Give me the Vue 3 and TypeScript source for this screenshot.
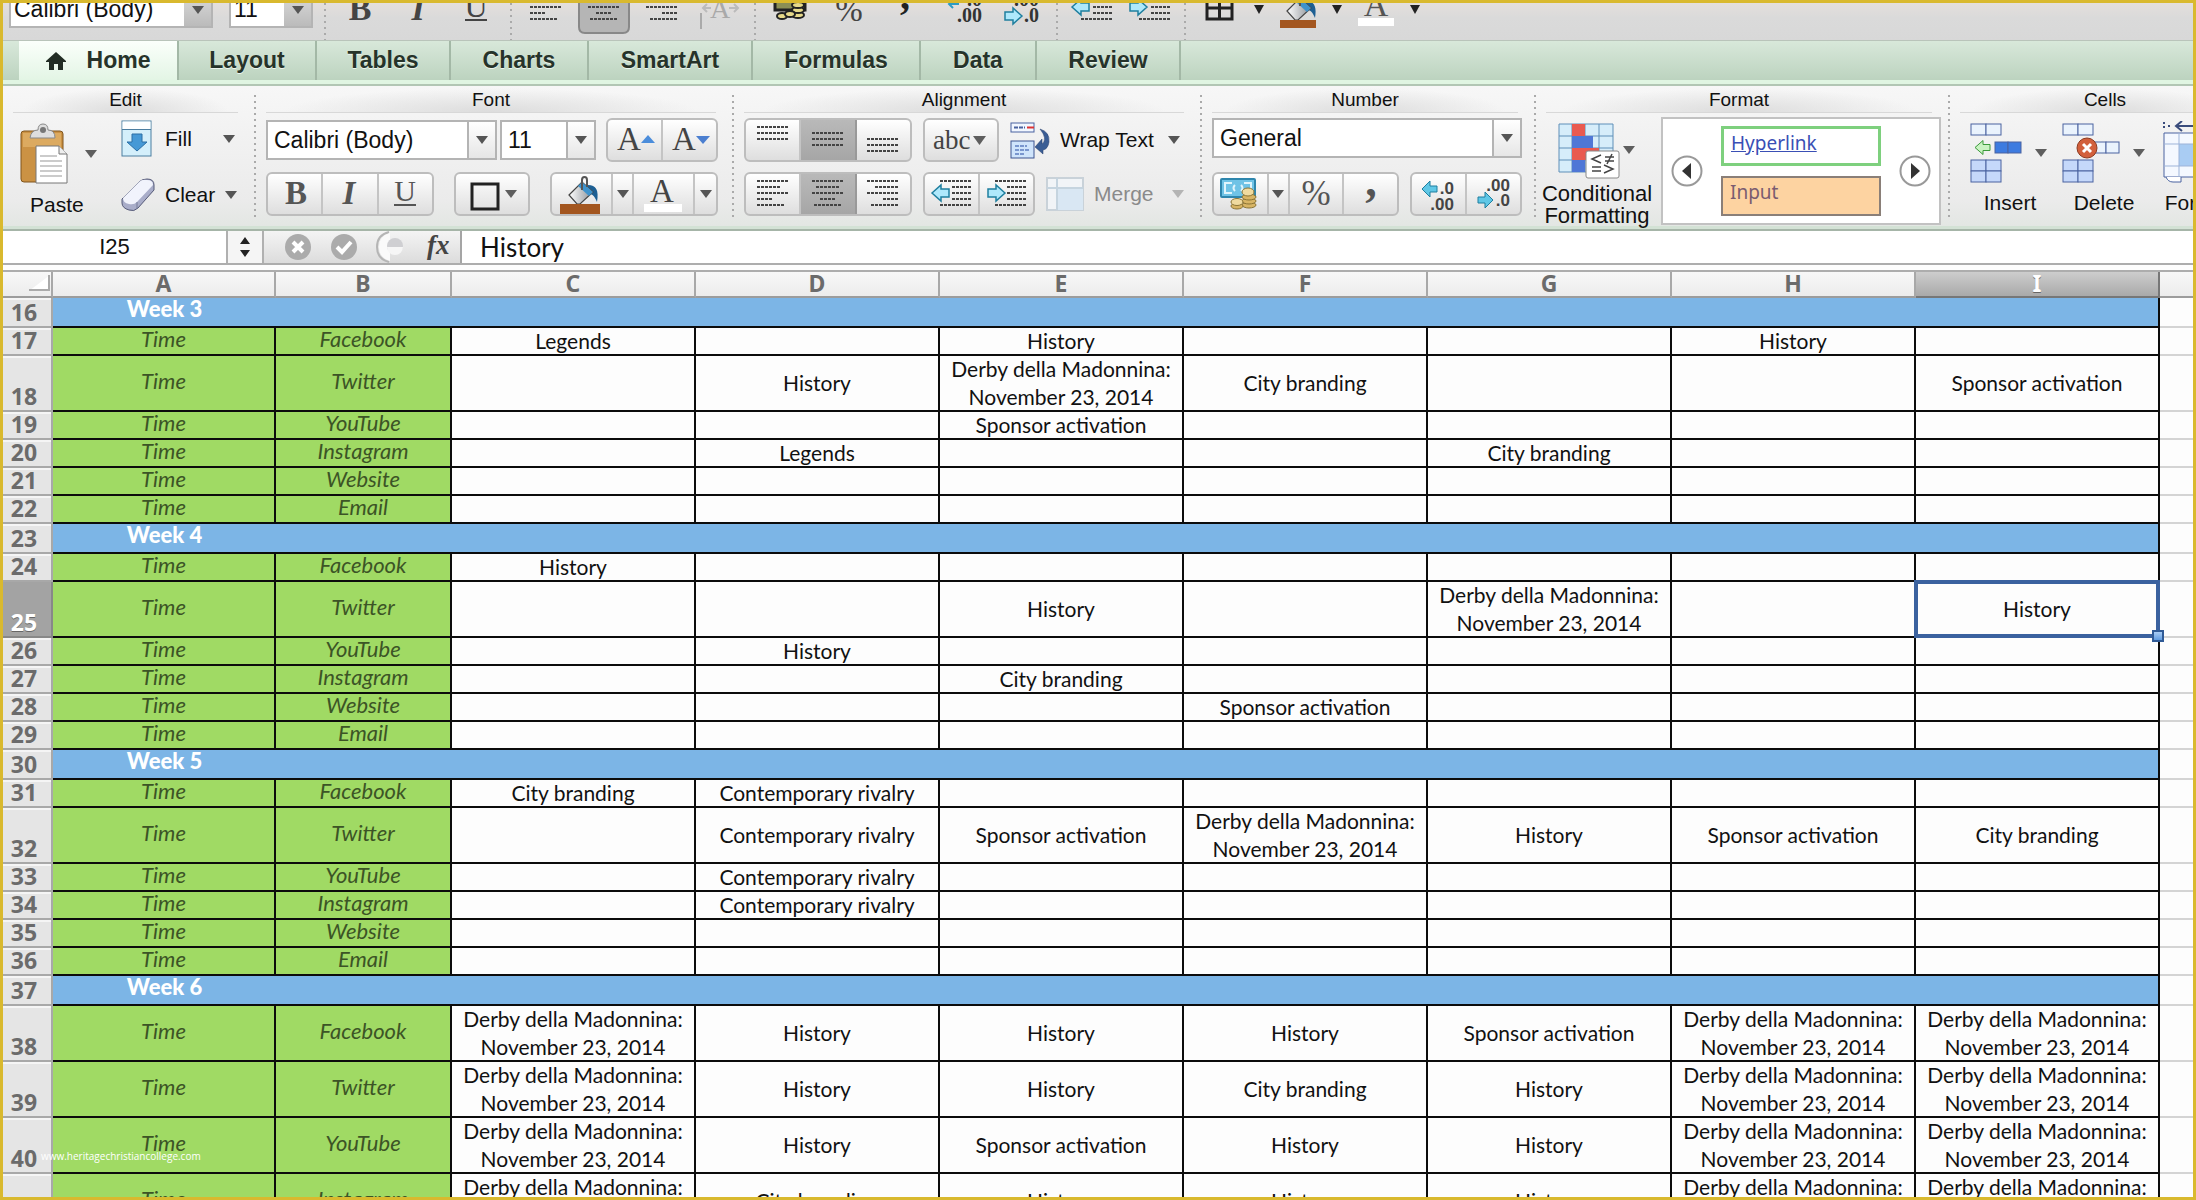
<script setup lang="ts">
import { h, ref } from 'vue'

type IconDef = [number, number, string]

// Builds a block of text-like rules; each entry is [x, y, width].
const rules = (list: number[][], color = '#444') =>
  list
    .map(([x, y, w]) => `<path d="M${x} ${y}h${w}" stroke="${color}" stroke-width="2" stroke-dasharray="3 1"/>`)
    .join('')

const tri = (x: number, y: number, w: number, hgt: number, fill = '#5e5e5e') =>
  `<path d="M${x} ${y}h${w}l${-w / 2} ${hgt}z" fill="${fill}"/>`

const serif = `font-family="Liberation Serif, serif"`
const sans = `font-family="Liberation Sans, sans-serif"`
const arrowL = (x: number, y: number) =>
  `<path d="M${x} ${y}l9-8v4h8v8h-8v4z" fill="#aee8fb" stroke="#1f7f9f" stroke-width="1.5"/>`
const arrowR = (x: number, y: number) =>
  `<path d="M${x} ${y}l-9-8v4h-8v8h8v4z" fill="#aee8fb" stroke="#1f7f9f" stroke-width="1.5"/>`
const ys = [9, 15, 21, 27, 33]
const ws = [32, 24, 32, 16, 28]
const bucket = (x: number, y: number) => `<g transform="translate(${x} ${y})">
  <path d="M24 8c8 0 11 5 9 17-2-5-4-8-9-9z" fill="#1d5f93"/>
  <path d="M5 18 18 5l11 10-13 12H13z" fill="url(#steel)" stroke="#444" stroke-width="1.2"/>
  <path d="M14 9l4-4 11 10-4 4z" fill="#3f93cc"/>
  <path d="M18 13V3q0-3 2.500-3T23 3v7" fill="none" stroke="#555" stroke-width="2"/></g>`
const coins = `<rect x="1" y="1" width="34" height="18" rx="1" fill="#6fc3e6" stroke="#2e86ad" stroke-width="2"/>
  <path d="M12 5H5v10h7M24 5h7v10h-7M15 7q-3 3 0 6M21 7q3 3 0 6" fill="none" stroke="#dff5fc" stroke-width="2"/>
  <g fill="#d8b565" stroke="#8b7434"><ellipse cx="29" cy="27" rx="7" ry="3"/><ellipse cx="29" cy="23" rx="7" ry="3"/><ellipse cx="29" cy="19" rx="7" ry="3"/><ellipse cx="28" cy="14" rx="6" ry="4" fill="#f0dba0"/><ellipse cx="17" cy="28" rx="6" ry="3"/><ellipse cx="17" cy="24" rx="6" ry="3.500" fill="#f0dba0"/></g>`
const cellGrid = (x: number, y: number, cols: number, rows: number, fill: string, cw = 15, rh = 11) => {
  let out = ''
  for (let r = 0; r < rows; r++)
    for (let c = 0; c < cols; c++)
      out += `<rect x="${x + c * cw}" y="${y + r * rh}" width="${cw}" height="${rh}" fill="${fill}" stroke="#4a63a0"/>`
  return out
}

const icons: Record<string, IconDef> = {
  // quick toolbar, 58 wide slots
  tBold: [58, 37, `<text x="29" y="17" text-anchor="middle" ${serif} font-size="34" font-weight="700" fill="#444">B</text>`],
  tItalic: [58, 37, `<text x="29" y="17" text-anchor="middle" ${serif} font-size="34" font-weight="700" font-style="italic" fill="#444">I</text>`],
  tUnder: [58, 37, `<text x="29" y="14" text-anchor="middle" ${serif} font-size="32" fill="#444">U</text><path d="M18 17h22" stroke="#444" stroke-width="2"/>`],
  tLeft: [58, 37, rules([[13, 4, 32], [13, 10, 16], [13, 16, 28]])],
  tCenter: [58, 37, `<path d="M4 -9v33q0 6 6 6h38q6 0 6-6V-9z" fill="#b5b5b5" stroke="#888" stroke-width="2"/>` + rules([[13, 4, 32], [21, 10, 16], [15, 16, 28]])],
  tRight: [58, 37, rules([[13, 4, 32], [29, 10, 16], [17, 16, 28]])],
  tEffect: [58, 37, `<path d="M10 10v16" stroke="#aaa" stroke-width="2"/><text x="29" y="15" text-anchor="middle" ${serif} font-size="28" fill="#a9a9a9">A</text><path d="M20 5h-7m3-4-4 4 4 4M38 5h8m-3-4 4 4-4 4" fill="none" stroke="#bbb" stroke-width="2"/>`],
  tMoney: [58, 37, `<path d="M14 -4h30v11H14z" fill="#8b8f55" stroke="#222" stroke-width="3"/><g fill="#e6d98a" stroke="#222" stroke-width="2"><ellipse cx="37" cy="12" rx="6" ry="3"/><ellipse cx="37" cy="7" rx="6" ry="3"/><ellipse cx="37" cy="2" rx="6" ry="3"/><ellipse cx="21" cy="13" rx="5" ry="3"/><ellipse cx="29" cy="11" rx="5" ry="3"/></g>`],
  tPercent: [58, 37, `<text x="30" y="18" text-anchor="middle" ${serif} font-size="33" fill="#444">%</text>`],
  tComma: [58, 37, `<text x="28" y="6" text-anchor="middle" ${serif} font-size="40" font-weight="700" fill="#222">,</text>`],
  tDecUp: [58, 37, `<path d="M24 1h-9m3-4-4 4 4 4" fill="none" stroke="#2d9cc4" stroke-width="2"/><g ${serif} font-size="20" fill="#333" text-anchor="end" font-weight="700"><text x="47" y="3">.0</text><text x="47" y="19">.00</text></g>`],
  tDecDown: [58, 37, arrowR(29, 13) + `<g ${serif} font-size="20" fill="#333" text-anchor="end" font-weight="700"><text x="46" y="3">.00</text><text x="46" y="19">.0</text></g>`],
  tOutdent: [58, 37, arrowL(9, 4) + rules([[30, 4, 20], [30, 10, 20], [18, 16, 32]])],
  tIndent: [58, 37, arrowR(26, 4) + rules([[30, 4, 20], [30, 10, 20], [18, 16, 32]])],
  tGrid: [58, 37, `<path d="M16 -6h25v22H16zM28.500 -6v22M16 5h25" fill="none" stroke="#222" stroke-width="3"/>`],
  tArrow: [20, 37, tri(5, 2, 10, 9, '#222')],
  tBucket: [58, 37, bucket(13, -10) + `<path d="M11 17h36v8H11z" fill="#a3561f"/>`],
  tFontColor: [58, 37, `<text x="29" y="13" text-anchor="middle" ${serif} font-size="34" fill="#555">A</text><path d="M11 15h36v8H11z" fill="#fff"/>`],
  // generic
  down: [12, 8, tri(0, 0, 12, 8, '#555')],
  downPale: [12, 8, tri(0, 0, 12, 8, '#b4b4b4')],
  home: [20, 18, `<path d="M10 0l10 9v1h-3v8h-5v-6H8v6H3v-8H0V9z" fill="#222d24"/>`],
  paste: [84, 64, `<rect x="3" y="10" width="42" height="51" rx="3" fill="#cb9244" stroke="#80551d"/>
    <path d="M5 12h38v14H5z" fill="#dcaa60"/>
    <path d="M12 17q1-8 8-8 0-6 5-6t5 6q7 0 7 8z" fill="#dedede" stroke="#888"/><circle cx="25" cy="9" r="3" fill="#777"/>
    <path d="M18 25h23l8 8v29H18z" fill="#fff" stroke="#777"/><path d="M41 25v8h8" fill="#eee" stroke="#777"/>
    <path d="M22 35h17M22 40h22M22 45h22M22 50h22M22 55h22" stroke="#bbb" stroke-width="1.500"/>` + tri(67, 29, 12, 8)],
  fill: [34, 38, `<rect x="1" y="1" width="29" height="35" fill="#d4effb" stroke="#4d7ea0"/><path d="M1.500 1.500h28v8h-28z" fill="#fff"/><path d="M1 9.500h29" stroke="#4d7ea0"/><path d="M11 14h10v8h5L16 31 6 22h5z" fill="#4699d6" stroke="#2b6ea5"/>`],
  clear: [34, 34, `<path d="M1 21 18 4q3-3 8-3 7 0 7 6v5L17 30q-4 4-9 2-7-2-7-7z" fill="#a9adc9" stroke="#555a78"/><path d="M2 20 18 4q3-3 8-2 6 0 6 5L16 24q-3 3-8 2-6-1-6-6z" fill="#f1f3fc"/><path d="M16 24v7" stroke="#777c99"/>`],
  bigA: [54, 40, `<text x="9" y="30" ${serif} font-size="33" fill="#444">A</text><path d="M33 23h14l-7-8z" fill="#4b8ddb" />`],
  smallA: [54, 40, `<text x="9" y="30" ${serif} font-size="33" fill="#444">A</text><path d="M33 16h14l-7 8z" fill="#4b7fd0"/>`],
  bold: [54, 40, `<text x="28" y="30" text-anchor="middle" ${serif} font-size="33" font-weight="700" fill="#555">B</text>`],
  italic: [54, 40, `<text x="26" y="30" text-anchor="middle" ${serif} font-size="33" font-weight="700" font-style="italic" fill="#555">I</text>`],
  under: [54, 40, `<text x="27" y="27" text-anchor="middle" ${serif} font-size="30" fill="#555">U</text><path d="M16 31h22" stroke="#555" stroke-width="2"/>`],
  border: [70, 40, `<path d="M15 10h26v25H15z" fill="none" stroke="#222" stroke-width="3"/>` + tri(48, 16, 12, 8)],
  bucket: [60, 40, bucket(12, 3) + `<path d="M8 30h40v10H8z" fill="#a3561f"/>`],
  fontColor: [62, 40, `<text x="29" y="28" text-anchor="middle" ${serif} font-size="33" fill="#444">A</text><path d="M11 30h38v8H11z" fill="#fff"/>`],
  vTop: [56, 44, rules([[12, 9, 32], [12, 15, 32], [12, 21, 32]])],
  vMid: [56, 44, rules([[12, 15, 32], [12, 21, 32], [12, 27, 32]])],
  vBot: [56, 44, rules([[12, 21, 32], [12, 27, 32], [12, 33, 32]])],
  hLeft: [56, 44, rules(ys.map((y, i) => [12, y, ws[i]]))],
  hCenter: [56, 44, rules(ys.map((y, i) => [12 + (32 - ws[i]) / 2, y, ws[i]]))],
  hRight: [56, 44, rules(ys.map((y, i) => [44 - ws[i], y, ws[i]]))],
  outdent: [56, 44, arrowL(8, 21) + rules([[16, 9, 32], [28, 15, 20], [28, 21, 20], [28, 27, 20], [16, 33, 32]])],
  indent: [56, 44, arrowR(26, 21) + rules([[16, 9, 32], [28, 15, 20], [28, 21, 20], [28, 27, 20], [16, 33, 32]])],
  abc: [72, 40, `<text x="8" y="29" ${serif} font-size="27" fill="#444">abc</text>` + tri(48, 16, 13, 9)],
  wrap: [40, 38, `<rect x="1" y="2" width="23" height="9" fill="#f2f7ff" stroke="#4a63a0"/><path d="M4 6.500h11" stroke="#4a63a0" stroke-width="2" stroke-dasharray="4 1"/><path d="M17 6.500h7" stroke="#d33" stroke-width="2"/>
    <rect x="1" y="20" width="23" height="17" fill="#cfe4fb" stroke="#3c5590"/><path d="M5 25h12M5 29h14M5 33h9" stroke="#5d7cc0" stroke-width="1.500" stroke-dasharray="4 1"/>
    <path d="M30 8q10 3 9 13-1 7-6 8v4l-8-7 7-8v5q6-5-2-15z" fill="#3a5d94" stroke="#243d6b" stroke-width=".5"/>`],
  merge: [38, 34, `<rect x="1" y="1" width="36" height="32" fill="#f1f4f7" stroke="#c9d2d9" stroke-width="2"/><path d="M11 11h26v22H11z" fill="#d9e7f3"/><path d="M11 1v32M1 11h36" stroke="#c5d4df" stroke-width="2"/>`],
  money: [52, 40, `<g transform="translate(6 4)">${coins}</g>`],
  percent: [54, 40, `<text x="27" y="31" text-anchor="middle" ${serif} font-size="35" fill="#555">%</text>`],
  comma: [54, 40, `<text x="27" y="22" text-anchor="middle" ${serif} font-size="46" font-weight="700" fill="#555">,</text>`],
  decUp: [54, 40, `<path d="M10 15l8-8v5h7v6h-7v5z" fill="#5fc7e6" stroke="#1f7f9f"/><g ${sans} font-size="17" font-weight="700" fill="#444" text-anchor="end"><text x="42" y="20">.0</text><text x="42" y="36">.00</text></g>`],
  decDown: [54, 40, `<path d="M26 26l-8-8v5h-7v6h7v5z" fill="#5fc7e6" stroke="#1f7f9f"/><g ${sans} font-size="17" font-weight="700" fill="#444" text-anchor="end"><text x="43" y="17">.00</text><text x="43" y="32">.0</text></g>`],
  cond: [84, 58, `<g stroke="#5e8fb8"><path d="M4 3h54v48H4z" fill="#d6edfa"/><path d="M4 15h54M4 27h54M4 39h54M17 3v48M30 3v48M44 3v48" fill="none"/></g>
    <path d="M17 3h13v12H17zM17 27h27v12H17z" fill="#e95a50"/><path d="M17 15h21v12H17zM17 39h13v12H17z" fill="#4f77d6"/>
    <rect x="31" y="30" width="33" height="27" rx="2" fill="#fff" stroke="#888"/><path d="M46 34l-9 4 9 4M50 36h9M50 40h9M57 33l-5 10M37 46h9M37 50h9M49 44l9 4-9 4" fill="none" stroke="#444" stroke-width="1.500"/>` + tri(68, 25, 12, 8)],
  insert: [80, 62, cellGrid(1, 3, 2, 1, '#eaf3fd') + cellGrid(25, 21, 2, 1, '#3d7be0', 13) + cellGrid(1, 39, 2, 2, '#c5d8fa') + `<path d="M5 26.500l8-7v4h7v6h-7v4z" fill="#c9f3c2" stroke="#3a9a3a"/>` + tri(65, 28, 12, 8)],
  remove: [84, 62, cellGrid(1, 3, 2, 1, '#eaf3fd') + cellGrid(31, 21, 2, 1, '#eaf3fd', 13) + cellGrid(1, 39, 2, 2, '#c5d8fa') + `<circle cx="25" cy="27" r="10" fill="#d2603c" stroke="#8c3a20"/><path d="M21 23l8 8M29 23l-8 8" stroke="#fff" stroke-width="3"/>` + tri(71, 28, 12, 8)],
  formatCells: [70, 62, `<path d="M1 1v8M5 5h4" stroke="#3a4c7c" stroke-width="2" stroke-dasharray="2 2"/><path d="M13 5h50M19 0l-6 5 6 5" stroke="#3a4c7c" stroke-width="2" fill="none"/><path d="M1 12h62v44H1z" fill="#f4f8ff" stroke="#4a63a0"/><path d="M16 23h47v22H16z" fill="#a9ccf3"/><path d="M16 12v44M1 23h62M1 45h62" stroke="#9db3d8"/><path d="M3 56q2 5 7 5h8v-5" fill="#fff" stroke="#4a63a0"/>`],
  prev: [32, 32, `<circle cx="16" cy="16" r="14.500" fill="#fff" stroke="#999" stroke-width="2"/><path d="M20 8v16l-9-8z" fill="#333"/>`],
  next: [32, 32, `<circle cx="16" cy="16" r="14.500" fill="#fff" stroke="#999" stroke-width="2"/><path d="M12 8v16l9-8z" fill="#333"/>`],
  stepper: [12, 24, `<path d="M1 9h10L6 2zM1 15h10l-5 7z" fill="#222"/>`],
  cancel: [28, 28, `<circle cx="14" cy="14" r="13" fill="#ababab"/><path d="M9 9l10 10M19 9L9 19" stroke="#fff" stroke-width="4"/>`],
  accept: [28, 28, `<circle cx="14" cy="14" r="13" fill="#ababab"/><path d="M7 14l5 5 9-10" fill="none" stroke="#fff" stroke-width="4"/>`],
  bubble: [32, 32, `<path d="M13 1q-12 3-12 15t12 15" fill="none" stroke="#b5b5b5" stroke-width="2"/><path d="M14 2q-11 3-11 14t11 14z" fill="#fafafa"/><circle cx="19" cy="15" r="8" fill="#cfcfd2"/><path d="M11 16a8 8 0 0 0 16 0z" fill="#f6f6f6"/>`],
  fx: [30, 30, `<text x="1" y="22" ${serif} font-size="27" font-style="italic" font-weight="700" fill="#444">fx</text>`],
  corner: [24, 18, `<path d="M23 1v16H2z" fill="#fff"/><path d="M22 1v15H2" fill="none" stroke="#aaa" stroke-width="2"/>`],
}

const Icon = (props: { name: string }) => {
  const [w, hgt, body] = icons[props.name]
  return h('svg', { width: w, height: hgt, viewBox: `0 0 ${w} ${hgt}`, 'aria-hidden': 'true', innerHTML: body })
}
Icon.props = ['name']

const quick = [
  ['|', 'tBold', 'tItalic', 'tUnder'],
  ['|', 'tLeft', 'tCenter', 'tRight', 'tEffect'],
  ['|', 'tMoney', 'tPercent', 'tComma', 'tDecUp', 'tDecDown'],
  ['|', 'tOutdent', 'tIndent'],
  ['|', 'tGrid', 'tArrow', 'tBucket', 'tArrow', 'tFontColor', 'tArrow'],
].flat()

const tabs = [
  { name: 'Home', width: 160 },
  { name: 'Layout', width: 138 },
  { name: 'Tables', width: 134 },
  { name: 'Charts', width: 138 },
  { name: 'SmartArt', width: 164 },
  { name: 'Formulas', width: 168 },
  { name: 'Data', width: 116 },
  { name: 'Review', width: 144 },
]
const active = ref('Home')
const formula = ref('History')
const cellName = ref('I25')

const columns = ['A', 'B', 'C', 'D', 'E', 'F', 'G', 'H', 'I']
const channels = ['Facebook', 'Twitter', 'YouTube', 'Instagram', 'Website', 'Email']

const H = 'History'
const S = 'Sponsor activation'
const C = 'City branding'
const L = 'Legends'
const R = 'Contemporary rivalry'
const D = 'Derby della Madonnina: November 23, 2014'

interface Row { n: number; week?: string; channel?: string; cells: string[]; tall: boolean }

const weeks: { title: string; start: number; rows: string[][] }[] = [
  { title: 'Week 3', start: 16, rows: [
    [L, '', H, '', '', H, ''], ['', H, D, C, '', '', S], ['', '', S, '', '', '', ''],
    ['', L, '', '', C, '', ''], ['', '', '', '', '', '', ''], ['', '', '', '', '', '', '']] },
  { title: 'Week 4', start: 23, rows: [
    [H, '', '', '', '', '', ''], ['', '', H, '', D, '', H], ['', H, '', '', '', '', ''],
    ['', '', C, '', '', '', ''], ['', '', '', S, '', '', ''], ['', '', '', '', '', '', '']] },
  { title: 'Week 5', start: 30, rows: [
    [C, R, '', '', '', '', ''], ['', R, S, D, H, S, C], ['', R, '', '', '', '', ''],
    ['', R, '', '', '', '', ''], ['', '', '', '', '', '', ''], ['', '', '', '', '', '', '']] },
  { title: 'Week 6', start: 37, rows: [
    [D, H, H, H, S, D, D], [D, H, H, C, H, D, D], [D, H, S, H, H, D, D], [D, C, H, H, H, D, D]] },
]

const rows: Row[] = weeks.flatMap((w) => [
  { n: w.start, week: w.title, cells: [], tall: false },
  ...w.rows.map((cells, i) => ({
    n: w.start + 1 + i, channel: channels[i], cells, tall: cells.includes(D),
  })),
])
</script>

<template>
  <div class="window">
    <svg class="defs" width="0" height="0" aria-hidden="true">
      <defs>
        <linearGradient id="steel" x1="0" x2="1"><stop offset="0" stop-color="#fff" /><stop offset="1" stop-color="#8a8f95" /></linearGradient>
      </defs>
    </svg>

    <div class="quickbar">
      <span class="combo quick-font"><select aria-label="Toolbar font"><option>Calibri (Body)</option></select><span class="drop"><Icon name="down" /></span></span>
      <span class="combo quick-size"><select aria-label="Toolbar font size"><option>11</option></select><span class="drop"><Icon name="down" /></span></span>
      <template v-for="(q, i) in quick" :key="i">
        <span v-if="q === '|'" class="quick-sep"></span>
        <button v-else type="button" class="plain" :aria-label="q.slice(1)"><Icon :name="q" /></button>
      </template>
    </div>

    <nav class="tabs">
      <button
        v-for="t in tabs"
        :key="t.name"
        type="button"
        class="tab"
        :class="{ active: active === t.name }"
        :style="{ width: t.width + 'px' }"
        @click="active = t.name"
      >
        <Icon v-if="t.name === 'Home'" name="home" />{{ t.name }}
      </button>
    </nav>

    <div class="ribbon">
      <section class="group edit">
        <h2>Edit</h2>
        <div class="body split">
          <button type="button" class="stack paste"><Icon name="paste" /><span>Paste</span></button>
          <div class="lines">
            <button type="button" class="row-btn"><Icon name="fill" /><span>Fill</span><Icon class="end" name="down" /></button>
            <button type="button" class="row-btn"><Icon name="clear" /><span>Clear</span><Icon class="end" name="down" /></button>
          </div>
        </div>
      </section>

      <section class="group font">
        <h2>Font</h2>
        <div class="body">
          <div class="line">
            <span class="combo font-name"><select aria-label="Font"><option>Calibri (Body)</option></select><span class="drop"><Icon name="down" /></span></span>
            <span class="combo font-size"><select aria-label="Font size"><option>11</option></select><span class="drop"><Icon name="down" /></span></span>
            <span class="seg sizes"><button type="button" aria-label="Grow font"><Icon name="bigA" /></button><button type="button" aria-label="Shrink font"><Icon name="smallA" /></button></span>
          </div>
          <div class="line spaced">
            <span class="seg triple"><button type="button" aria-label="Bold"><Icon name="bold" /></button><button type="button" aria-label="Italic"><Icon name="italic" /></button><button type="button" aria-label="Underline"><Icon name="under" /></button></span>
            <span class="seg single"><button type="button" aria-label="Borders"><Icon name="border" /></button></span>
            <span class="seg colors"><button type="button" class="wide" aria-label="Fill colour"><Icon name="bucket" /></button><button type="button" class="thin" aria-label="Fill colours"><Icon name="down" /></button><button type="button" class="wide" aria-label="Font colour"><Icon name="fontColor" /></button><button type="button" class="thin" aria-label="Font colours"><Icon name="down" /></button></span>
          </div>
        </div>
      </section>

      <section class="group alignment">
        <h2>Alignment</h2>
        <div class="body">
          <div class="line gap">
            <span class="seg triple"><button type="button" aria-label="Align top"><Icon name="vTop" /></button><button type="button" class="on" aria-label="Align middle"><Icon name="vMid" /></button><button type="button" aria-label="Align bottom"><Icon name="vBot" /></button></span>
            <span class="seg single"><button type="button" aria-label="Orientation"><Icon name="abc" /></button></span>
            <button type="button" class="row-btn wrap"><Icon name="wrap" /><span>Wrap Text</span><Icon class="end" name="down" /></button>
          </div>
          <div class="line gap">
            <span class="seg triple"><button type="button" aria-label="Align left"><Icon name="hLeft" /></button><button type="button" class="on" aria-label="Centre"><Icon name="hCenter" /></button><button type="button" aria-label="Align right"><Icon name="hRight" /></button></span>
            <span class="seg sizes"><button type="button" aria-label="Decrease indent"><Icon name="outdent" /></button><button type="button" aria-label="Increase indent"><Icon name="indent" /></button></span>
            <button type="button" class="row-btn merge"><Icon name="merge" /><span>Merge</span><Icon class="end" name="downPale" /></button>
          </div>
        </div>
      </section>

      <section class="group number">
        <h2>Number</h2>
        <div class="body">
          <div class="line">
            <span class="combo format"><select aria-label="Number format"><option>General</option></select><span class="drop"><Icon name="down" /></span></span>
          </div>
          <div class="line gap">
            <span class="seg money"><button type="button" class="wide" aria-label="Currency"><Icon name="money" /></button><button type="button" class="thin" aria-label="Currencies"><Icon name="down" /></button><button type="button" class="wide" aria-label="Percent"><Icon name="percent" /></button><button type="button" class="wide" aria-label="Comma"><Icon name="comma" /></button></span>
            <span class="seg sizes"><button type="button" aria-label="Increase decimals"><Icon name="decUp" /></button><button type="button" aria-label="Decrease decimals"><Icon name="decDown" /></button></span>
          </div>
        </div>
      </section>

      <section class="group styles">
        <h2>Format</h2>
        <div class="body split">
          <button type="button" class="stack cond"><Icon name="cond" /><span>Conditional Formatting</span></button>
          <div class="gallery">
            <button type="button" class="plain" aria-label="Previous styles"><Icon name="prev" /></button>
            <div class="swatches">
              <button type="button" class="swatch link">Hyperlink</button>
              <button type="button" class="swatch input">Input</button>
            </div>
            <button type="button" class="plain" aria-label="Next styles"><Icon name="next" /></button>
          </div>
        </div>
      </section>

      <section class="group cells">
        <h2>Cells</h2>
        <div class="body split">
          <button type="button" class="stack"><Icon name="insert" /><span>Insert</span></button>
          <button type="button" class="stack"><Icon name="remove" /><span>Delete</span></button>
          <button type="button" class="stack"><Icon name="formatCells" /><span>Format</span></button>
        </div>
      </section>
    </div>

    <div class="formula-bar">
      <input v-model="cellName" class="name-box" aria-label="Cell name" />
      <button type="button" class="step" aria-label="Recent cells"><Icon name="stepper" /></button>
      <div class="actions">
        <button type="button" class="plain" aria-label="Cancel"><Icon name="cancel" /></button>
        <button type="button" class="plain" aria-label="Enter"><Icon name="accept" /></button>
        <button type="button" class="plain" aria-label="Formula builder"><Icon name="bubble" /></button>
        <button type="button" class="plain" aria-label="Insert function"><Icon name="fx" /></button>
      </div>
      <input v-model="formula" class="formula" aria-label="Formula" />
    </div>

    <main class="sheet">
      <table>
        <colgroup>
          <col class="c-head" /><col class="c-time" /><col class="c-channel" />
          <col v-for="i in 7" :key="i" class="c-day" /><col class="c-rest" />
        </colgroup>
        <thead>
          <tr>
            <th class="corner"><Icon name="corner" /></th>
            <th v-for="c in columns" :key="c" scope="col" :class="{ picked: c === 'I' }">{{ c }}</th>
            <th class="rest"></th>
          </tr>
        </thead>
        <tbody>
          <tr v-for="r in rows" :key="r.n" :class="{ week: r.week, tall: r.tall }">
            <th scope="row" :class="{ picked: r.n === 25 }"><div>{{ r.n }}</div></th>
            <template v-if="r.week">
              <td class="week-name"><div>{{ r.week }}</div></td>
              <td class="week-fill" colspan="8"></td>
            </template>
            <template v-else>
              <td class="key"><div>Time</div></td>
              <td class="key"><div>{{ r.channel }}</div></td>
              <td v-for="(c, i) in r.cells" :key="i" :class="{ selected: r.n === 25 && i === 6 }">
                <div>{{ c }}</div>
              </td>
            </template>
            <td class="rest"></td>
          </tr>
        </tbody>
      </table>
      <span class="site">www.heritagechristiancollege.com</span>
    </main>
  </div>
</template>

<style>
body { margin: 0; overflow: hidden; }
</style>

<style scoped>
.window {
  box-sizing: border-box;
  display: flex;
  flex-direction: column;
  height: 100vh;
  overflow: hidden;
  border: 3px solid #d9b92e;
  background: #fdfdfd;
  color: #111;
  font-family: "Liberation Sans", Arial, sans-serif;
  font-size: 21px;
}
.defs { position: absolute; }
svg { display: block; flex: none; }
button, select, input {
  box-sizing: border-box;
  margin: 0;
  padding: 0;
  border: 0;
  border-radius: 0;
  background: none;
  color: inherit;
  font: inherit;
}
select { appearance: none; }

.quickbar {
  display: flex;
  align-items: flex-end;
  flex: none;
  height: 37px;
  overflow: hidden;
  padding-left: 6px;
  background: linear-gradient(#e4dfdc, #dadada 40%, #d8d8d8);
}
.quickbar .combo { height: 40px; margin-bottom: 12px; }
.quick-font { width: 204px; margin-right: 16px; }
.quick-size { width: 84px; margin-right: 6px; }
.quickbar .drop { width: 27px; padding-top: 4px; background: linear-gradient(#ddd, #bbb); border: 0; }
.quickbar .combo select { padding: 2px 0 0 3px; }
.quick-sep {
  width: 12px;
  height: 37px;
  background: repeating-linear-gradient(#aaa 0 2px, transparent 2px 6px) center / 2px 100% no-repeat;
}

.combo { display: flex; box-sizing: border-box; border: 2px solid #b4b4b4; background: #fff; }
.combo select { flex: 1; min-width: 0; padding-left: 6px; font-size: 23px; line-height: 32px; }
.drop {
  display: flex;
  align-items: center;
  justify-content: center;
  flex: none;
  width: 26px;
  border-left: 2px solid #b4b4b4;
  background: linear-gradient(#fff, #e6e6e6);
}

.tabs {
  display: flex;
  flex: none;
  box-sizing: border-box;
  height: 40px;
  padding-left: 16px;
  border-top: 1px solid #b9c4ba;
  background: linear-gradient(#d8e8da, #bcd3bf);
}
.tab {
  display: flex;
  align-items: center;
  justify-content: center;
  gap: 21px;
  border-right: 2px solid #a3b8a6;
  color: #26332a;
  font-size: 23px;
  font-weight: 700;
  text-shadow: 0 1px 0 #edf6ee;
}
.tab.active { background: linear-gradient(#fbfffb, #e3f5e5); }

.ribbon {
  display: flex;
  flex: none;
  overflow: hidden;
  height: 140px;
  border-top: 2px solid #b2c6b4;
  border-bottom: 2px solid #a6b5a8;
  background: linear-gradient(#f7f7f7, #ebebeb 80%, #e2e6e2);
  box-shadow: 0 -4px 0 #e0f5e2, inset 0 -3px 0 #d3e2d5;
  margin-top: 4px;
  padding-bottom: 3px;
}
.group {
  box-sizing: border-box;
  flex: none;
  padding: 0 10px;
  background: repeating-linear-gradient(#aaa 0 2px, transparent 2px 6px) right 9px / 2px 122px no-repeat;
}
.edit { width: 253px; }
.font { width: 478px; }
.alignment { width: 468px; }
.number { width: 334px; }
.styles { width: 414px; }
.cells { width: 318px; }
.group h2 {
  box-sizing: border-box;
  height: 27px;
  margin: 0 8px 0 0;
  border-bottom: 1px solid #d8d8d8;
  background: radial-gradient(ellipse at 50% 100%, #dcdcdc, transparent 65%);
  font-size: 19px;
  font-weight: 400;
  line-height: 28px;
  text-align: center;
}
.body { display: flex; flex-direction: column; gap: 10px; padding-top: 5px; }
.body.split { flex-direction: row; gap: 0; }
.line { display: flex; align-items: center; height: 44px; }
.line.gap { gap: 11px; }
.line.spaced { justify-content: space-between; padding-right: 6px; }
.line .combo { height: 40px; }
.font-name { width: 231px; margin-right: 3px; }
.font-size { width: 96px; margin-right: 10px; }
.combo.format { width: 310px; margin-bottom: 4px; }
.seg {
  box-sizing: border-box;
  display: flex;
  height: 44px;
  overflow: hidden;
  border: 2px solid #bdbdbd;
  border-radius: 6px;
  background: linear-gradient(#fff, #dedede);
}
.seg button {
  display: flex;
  align-items: center;
  justify-content: center;
  flex: 1 1 0;
  min-width: 0;
  overflow: hidden;
  border-right: 2px solid #c4c4c4;
}
.seg button:last-child { border-right: 0; }
.seg button.on { background: linear-gradient(#b9b9b9, #a6a6a6); border-color: #999; }
.seg button.thin { flex: 0 0 21px; }
.triple, .colors { width: 168px; }
.sizes { width: 112px; }
.single { width: 76px; }
.seg.money { width: 187px; }
.row-btn { display: flex; align-items: center; gap: 10px; }
.row-btn .end { margin-left: auto; }
.row-btn.wrap { width: 170px; }
.row-btn.merge { width: 138px; color: #8a8a8a; }
.lines { display: flex; flex-direction: column; gap: 14px; }
.lines .row-btn { width: 114px; height: 42px; }
.stack { display: flex; flex-direction: column; align-items: center; line-height: 22px; }
.stack span { margin-top: 9px; }
.paste { width: 108px; align-items: flex-start; padding: 3px 0 0 5px; }
.paste span { margin-left: 12px; }
.styles .body { padding-top: 4px; }
.stack.cond { width: 108px; padding-top: 4px; font-size: 22px; margin-left: -3px; }
.stack.cond span { margin-top: 4px; }
.gallery {
  box-sizing: border-box;
  display: flex;
  align-items: center;
  justify-content: space-between;
  flex: none;
  width: 280px;
  height: 108px;
  margin-left: 10px;
  padding: 0 8px;
  border: 2px solid #c2c2c2;
  background: #fff;
}
.swatches { display: flex; flex-direction: column; gap: 10px; }
.swatch {
  width: 160px;
  height: 40px;
  padding-left: 7px;
  border: 2px solid #8a7f78;
  font-family: "Noto Sans", sans-serif;
  font-size: 19px;
  line-height: 28px;
  padding-bottom: 8px;
  text-align: left;
}
.swatch.link { border: 3px solid #7ed07e; background: #fff; color: #3a4fb5; text-decoration: underline; }
.swatch.input { background: #fdd3a1; color: #7a5c70; }
.cells .body { gap: 10px; padding-left: 8px; }
.cells .stack { width: 84px; flex: none; padding-top: 3px; }

.formula-bar {
  display: flex;
  flex: none;
  height: 32px;
  border-bottom: 2px solid #adadad;
}
.name-box { width: 225px; border-right: 2px solid #b0b0b0; background: #fff; font-size: 22px; text-align: center; }
.step { display: flex; align-items: center; justify-content: center; width: 36px; border-right: 2px solid #b0b0b0; background: #f5f5f5; }
.actions {
  display: flex;
  align-items: center;
  gap: 18px;
  width: 198px;
  box-sizing: border-box;
  padding-left: 20px;
  border-right: 2px solid #a5a5a5;
  background: linear-gradient(#f4f4f4, #dcdcdc);
}
.formula { flex: 1; min-width: 0; padding-left: 18px; background: #fff; font-family: Lato, sans-serif; font-size: 26px; }

.sheet { position: relative; flex: 1; min-height: 0; margin-top: 5px; overflow: hidden; border-top: 2px solid #adadad; }
table { width: 100%; border-spacing: 0; table-layout: fixed; font-family: Lato, sans-serif; font-size: 21px; }
.c-head { width: 50px; }
.c-time { width: 223px; }
.c-channel { width: 176px; }
.c-day { width: 244px; }
.c-rest { width: 33px; }
th, td { box-sizing: border-box; padding: 0; }
th { color: #6b6b6b; font-family: "Noto Sans", sans-serif; font-size: 23px; font-weight: 700; }
thead th {
  height: 26px;
  padding-bottom: 2px;
  border-right: 2px solid #a8a8a8;
  border-bottom: 2px solid #9c9c9c;
  background: linear-gradient(#f8f8f8, #ececec);
  line-height: 22px;
}
thead th.picked { border-color: #777; background: linear-gradient(#cdcdcd, #a9a9a9); color: #fff; text-shadow: 0 1px 0 #666; }
thead .corner svg { margin-left: 24px; }
thead .rest { border-right: 0; }
tbody th { border-right: 2px solid #a8a8a8; border-bottom: 2px solid #a8a8a8; background: #e5e5e5; box-shadow: inset 0 2px 0 #f5f5f5; }
tbody th.picked { background: #a3a3a3; border-color: #888; box-shadow: none; color: #fff; text-shadow: 0 1px 0 #666; }
td { border-right: 2px solid #0c0c0c; border-bottom: 2px solid #0c0c0c; background: #fdfdfd; }
td div, tbody th div {
  display: flex;
  box-sizing: border-box;
  align-items: center;
  justify-content: center;
  height: 26px;
  padding: 0 8px 1px;
  line-height: 28px;
  text-align: center;
}
tbody th div { align-items: flex-end; padding: 0 6px 1px 0; line-height: 26px; }
.week td div, .week th div { height: 28px; }
.tall td div, .tall th div { height: 54px; }
td.key { background: #a0da64; color: #3c5426; font-size: 22px; font-style: italic; }
td.key div { padding-bottom: 4px; }
td.week-name { border-right: 0; background: #7cb5e6; color: #fff; font-size: 22px; font-weight: 900; }
.week td.week-name div { padding-bottom: 6px; }
td.week-fill { background: #7cb5e6; }
td.rest { border-right: 0; border-bottom-color: #d4d4d4; }
td.selected { position: relative; }
td.selected::before { content: ""; position: absolute; inset: -2px; border: 4px solid #3b629f; }
td.selected::after {
  content: "";
  position: absolute;
  right: -6px;
  bottom: -6px;
  z-index: 1;
  width: 8px;
  height: 8px;
  border: 2px solid #2f5a96;
  background: linear-gradient(#a9cdf5, #5f9be0);
}
.site { position: absolute; left: 38px; bottom: 34px; color: #fff; font-family: "Open Sans", sans-serif; font-size: 10px; line-height: 14px; }
</style>
